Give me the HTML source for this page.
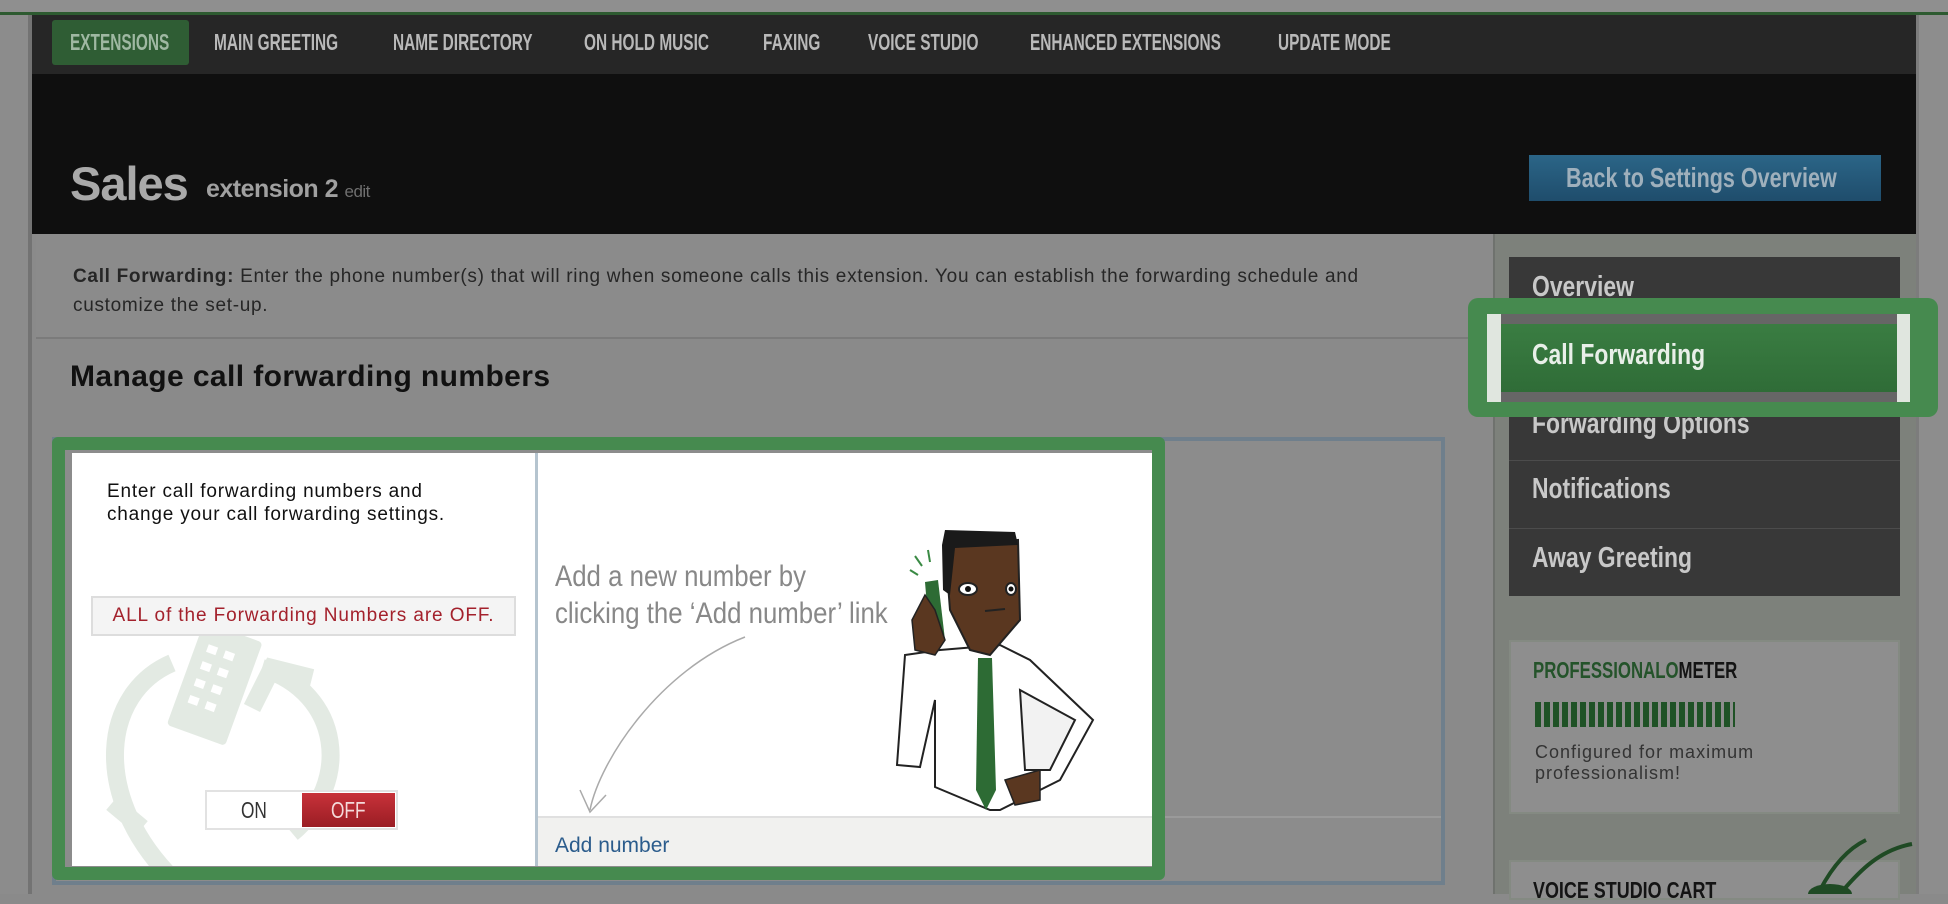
<!DOCTYPE html>
<html><head><meta charset="utf-8">
<style>
*{margin:0;padding:0;box-sizing:border-box}
body{width:1948px;height:894px;overflow:hidden;background:#8a8a8a;font-family:"Liberation Sans",sans-serif;position:relative}
.a{position:absolute;white-space:nowrap}
.n{transform-origin:left center}
.nav{color:#b9b9b9;font-size:23px;top:29px;font-weight:bold;transform:scaleX(0.67)}
.side{color:#c8c8c8;font-size:29px;left:1532px;font-weight:bold;transform:scaleX(0.79)}
</style></head><body>
<div class="a" style="left:0;top:0;width:1948px;height:13px;background:#8f8f8f"></div>
<div class="a" style="left:0;top:12px;width:1948px;height:3px;background:#2d5a30"></div>
<div class="a" style="left:0;top:15px;width:32px;height:879px;background:#8c8c8c;border-right:4px solid #737373"></div>
<div class="a" style="left:1916px;top:15px;width:32px;height:879px;background:#8d8d8d;border-left:3px solid #7c7c7c"></div>
<!-- nav -->
<div class="a" style="left:32px;top:15px;width:1884px;height:59px;background:#262626"></div>
<div class="a" style="left:52px;top:20px;width:137px;height:45px;background:#2f5d34;border-radius:3px"></div>
<div class="a n nav" style="left:70px;color:#9fb8a2">EXTENSIONS</div>
<div class="a n nav" style="left:214px">MAIN GREETING</div>
<div class="a n nav" style="left:393px">NAME DIRECTORY</div>
<div class="a n nav" style="left:584px">ON HOLD MUSIC</div>
<div class="a n nav" style="left:763px">FAXING</div>
<div class="a n nav" style="left:868px">VOICE STUDIO</div>
<div class="a n nav" style="left:1030px">ENHANCED EXTENSIONS</div>
<div class="a n nav" style="left:1278px">UPDATE MODE</div>
<!-- header -->
<div class="a" style="left:32px;top:74px;width:1884px;height:160px;background:#0f0f0f"></div>
<div class="a" style="left:70px;top:156px;font-size:47px;font-weight:bold;color:#a9a9a9;letter-spacing:-1px">Sales</div>
<div class="a" style="left:206px;top:175px;font-size:25px;font-weight:bold;color:#a0a0a0;letter-spacing:-0.5px">extension 2 <span style="font-size:17px;font-weight:normal;color:#6f6f6f">edit</span></div>
<div class="a" style="left:1529px;top:155px;width:352px;height:46px;background:linear-gradient(#2b6587,#1f4d6c)"></div>
<div class="a n" style="left:1566px;top:155px;color:#9fb0bc;font-size:28px;font-weight:bold;line-height:46px;transform:scaleX(0.77)">Back to Settings Overview</div>
<!-- description -->
<div class="a" style="left:36px;top:234px;width:1457px;height:105px;background:#8b8b8b;border-bottom:2px solid #7b7b7b"></div>
<div class="a" style="left:73px;top:262px;font-size:19px;letter-spacing:0.7px;color:#262626;line-height:29px"><b>Call Forwarding:</b> Enter the phone number(s) that will ring when someone calls this extension. You can establish the forwarding schedule and<br>customize the set-up.</div>
<div class="a" style="left:70px;top:360px;font-size:30px;letter-spacing:0.4px;font-weight:bold;color:#111">Manage call forwarding numbers</div>
<!-- panel -->
<div class="a" style="left:52px;top:437px;width:1393px;height:448px;border:4px solid #6f7f8c;background:#8c8c8c"></div>
<div class="a" style="left:1160px;top:816px;width:281px;height:2px;background:#9a9a9a"></div>
<div class="a" style="left:52px;top:437px;width:1113px;height:443px;border:13px solid #468a4f;border-radius:6px"></div>
<div class="a" style="left:72px;top:453px;width:1080px;height:413px;background:#fff"></div>
<div class="a" style="left:535px;top:453px;width:3px;height:413px;background:#b5c4cf"></div>
<div class="a" style="left:538px;top:816px;width:614px;height:50px;background:#f1f1ef;border-top:2px solid #e0e0e0"></div>
<div class="a" style="left:555px;top:834px;font-size:21px;color:#2b5c8c">Add number</div>
<div class="a" style="left:107px;top:480px;font-size:19px;letter-spacing:0.8px;color:#111;line-height:23px">Enter call forwarding numbers and<br>change your call forwarding settings.</div>
<svg class="a" style="left:72px;top:453px" width="463" height="413">
<g fill="none" stroke="#e3eae3" stroke-width="18">
<path d="M95 420 C20 340 30 240 100 210"/><path d="M40 350 L70 375"/>
<path d="M190 215 C270 240 280 330 220 380"/><path d="M180 255 L200 215 L240 225"/>
</g>
<g transform="rotate(20 140 235)">
<rect x="110" y="175" width="62" height="110" rx="4" fill="#e3eae3"/>
<g fill="#fff"><rect x="122" y="195" width="10" height="8"/><rect x="140" y="195" width="10" height="8"/><rect x="122" y="213" width="10" height="8"/><rect x="140" y="213" width="10" height="8"/><rect x="122" y="231" width="10" height="8"/><rect x="140" y="231" width="10" height="8"/><rect x="122" y="249" width="10" height="8"/><rect x="140" y="249" width="10" height="8"/></g>
</g>
</svg>
<div class="a" style="left:91px;top:596px;width:425px;height:40px;background:#f4f4f4;border:2px solid #ddd"></div>
<div class="a" style="left:91px;top:596px;width:425px;color:#a3212c;font-size:19px;letter-spacing:0.9px;text-align:center;line-height:40px">ALL of the Forwarding Numbers are OFF.</div>
<div class="a" style="left:205px;top:790px;width:193px;height:40px;background:#fff;border:2px solid #e2e2e2"></div>
<div class="a n" style="left:241px;top:797px;font-size:23px;color:#333;transform:scaleX(0.75)">ON</div>
<div class="a" style="left:302px;top:793px;width:93px;height:34px;background:linear-gradient(#c8323a,#9a1d24)"></div>
<div class="a n" style="left:331px;top:793px;color:#f4dada;font-size:23px;line-height:34px;transform:scaleX(0.75)">OFF</div>
<div class="a n" style="left:555px;top:558px;font-size:30px;color:#888;line-height:37px;transform:scaleX(0.86)">Add a new number by<br>clicking the ‘Add number’ link</div>
<svg class="a" style="left:0;top:0" width="1948" height="894">
<path d="M745 637 C660 670 600 760 590 810" fill="none" stroke="#aaa" stroke-width="1.5"/>
<path d="M580 790 L590 812 L606 795" fill="none" stroke="#aaa" stroke-width="1.5"/>
<path d="M940 650 L905 655 L897 765 L920 767 L935 700 L935 787 L990 810 L1000 810 L1060 780 L1093 720 L1030 660 L1000 645 Z" fill="#fff" stroke="#222" stroke-width="2"/>
<path d="M1020 690 L1075 720 L1050 770 L1025 770 Z" fill="#f2f2f2" stroke="#222" stroke-width="2"/>
<path d="M978 658 L992 658 L996 790 L986 810 L976 790 Z" fill="#2d6b34"/>
<path d="M1005 780 L1040 770 L1040 800 L1015 805 Z" fill="#5a3720" stroke="#222" stroke-width="1.5"/>
<path d="M945 545 L1018 540 L1020 620 L990 655 L970 650 L950 610 Z" fill="#5a3720" stroke="#222" stroke-width="2"/>
<path d="M942 545 L945 530 L1015 532 L1018 545 L955 548 L950 595 L943 590 Z" fill="#1a1a1a"/>
<ellipse cx="968" cy="589" rx="9" ry="6" fill="#fff" stroke="#222" stroke-width="2"/><circle cx="968" cy="589" r="3" fill="#111"/>
<ellipse cx="1011" cy="589" rx="5" ry="6" fill="#fff" stroke="#222" stroke-width="2"/><circle cx="1011" cy="589" r="2.5" fill="#111"/>
<path d="M985 611 L1005 609" stroke="#222" stroke-width="2"/>
<path d="M925 582 L938 580 L945 640 L930 643 Z" fill="#2d6b34"/>
<path d="M912 620 L925 595 L935 610 L945 640 L935 655 L915 650 Z" fill="#5a3720" stroke="#222" stroke-width="1.5"/>
<g stroke="#3a8a44" stroke-width="2"><path d="M918 575 L910 570"/><path d="M922 566 L915 556"/><path d="M930 562 L928 550"/></g>
</svg>
<!-- sidebar -->
<div class="a" style="left:1493px;top:234px;width:423px;height:660px;background:#7d817b;border-left:2px solid #6f726e"></div>
<div class="a" style="left:1509px;top:257px;width:391px;height:339px;background:#383838"></div>
<div class="a" style="left:1509px;top:460px;width:391px;height:1px;background:#4c4c4c"></div>
<div class="a" style="left:1509px;top:528px;width:391px;height:1px;background:#4c4c4c"></div>
<div class="a n side" style="top:271px">Overview</div>
<div class="a n side" style="top:408px">Forwarding Options</div>
<div class="a n side" style="top:473px">Notifications</div>
<div class="a n side" style="top:542px">Away Greeting</div>
<div class="a" style="left:1468px;top:298px;width:470px;height:119px;background:#468a4f;border-radius:10px"></div>
<div class="a" style="left:1487px;top:314px;width:423px;height:88px;background:#666"></div>
<div class="a" style="left:1487px;top:314px;width:14px;height:88px;background:#e0e6df"></div>
<div class="a" style="left:1897px;top:314px;width:13px;height:88px;background:#e0e6df"></div>
<div class="a" style="left:1501px;top:324px;width:396px;height:68px;background:linear-gradient(#3a7d42,#2f6c37)"></div>
<div class="a n" style="left:1532px;top:339px;font-size:29px;font-weight:bold;color:#e8efe8;transform:scaleX(0.79)">Call Forwarding</div>
<div class="a" style="left:1509px;top:640px;width:391px;height:174px;background:#8e8e8e;border:2px solid #848a82"></div>
<div class="a n" style="left:1533px;top:657px;font-size:23px;font-weight:bold;color:#24532a;transform:scaleX(0.73)">PROFESSIONALO<span style="color:#141414">METER</span></div>
<div class="a" style="left:1535px;top:702px;width:200px;height:25px;background:repeating-linear-gradient(90deg,#1f5226 0 6px,transparent 6px 9px)"></div>
<div class="a" style="left:1535px;top:742px;font-size:18px;letter-spacing:1px;color:#333;line-height:21px">Configured for maximum<br>professionalism!</div>
<div class="a" style="left:1509px;top:860px;width:391px;height:40px;background:#8e8e8e;border:2px solid #848a82"></div>
<div class="a n" style="left:1533px;top:877px;font-size:23px;font-weight:bold;color:#141414;transform:scaleX(0.78)">VOICE STUDIO CART</div>
<svg class="a" style="left:1800px;top:830px" width="148" height="64"><g fill="none" stroke="#1f4a24" stroke-width="4"><path d="M18 64 C30 40 45 20 66 10"/><path d="M40 64 C60 40 80 20 112 14"/></g><ellipse cx="30" cy="64" rx="22" ry="10" fill="#1f4a24"/></svg>
</body></html>
